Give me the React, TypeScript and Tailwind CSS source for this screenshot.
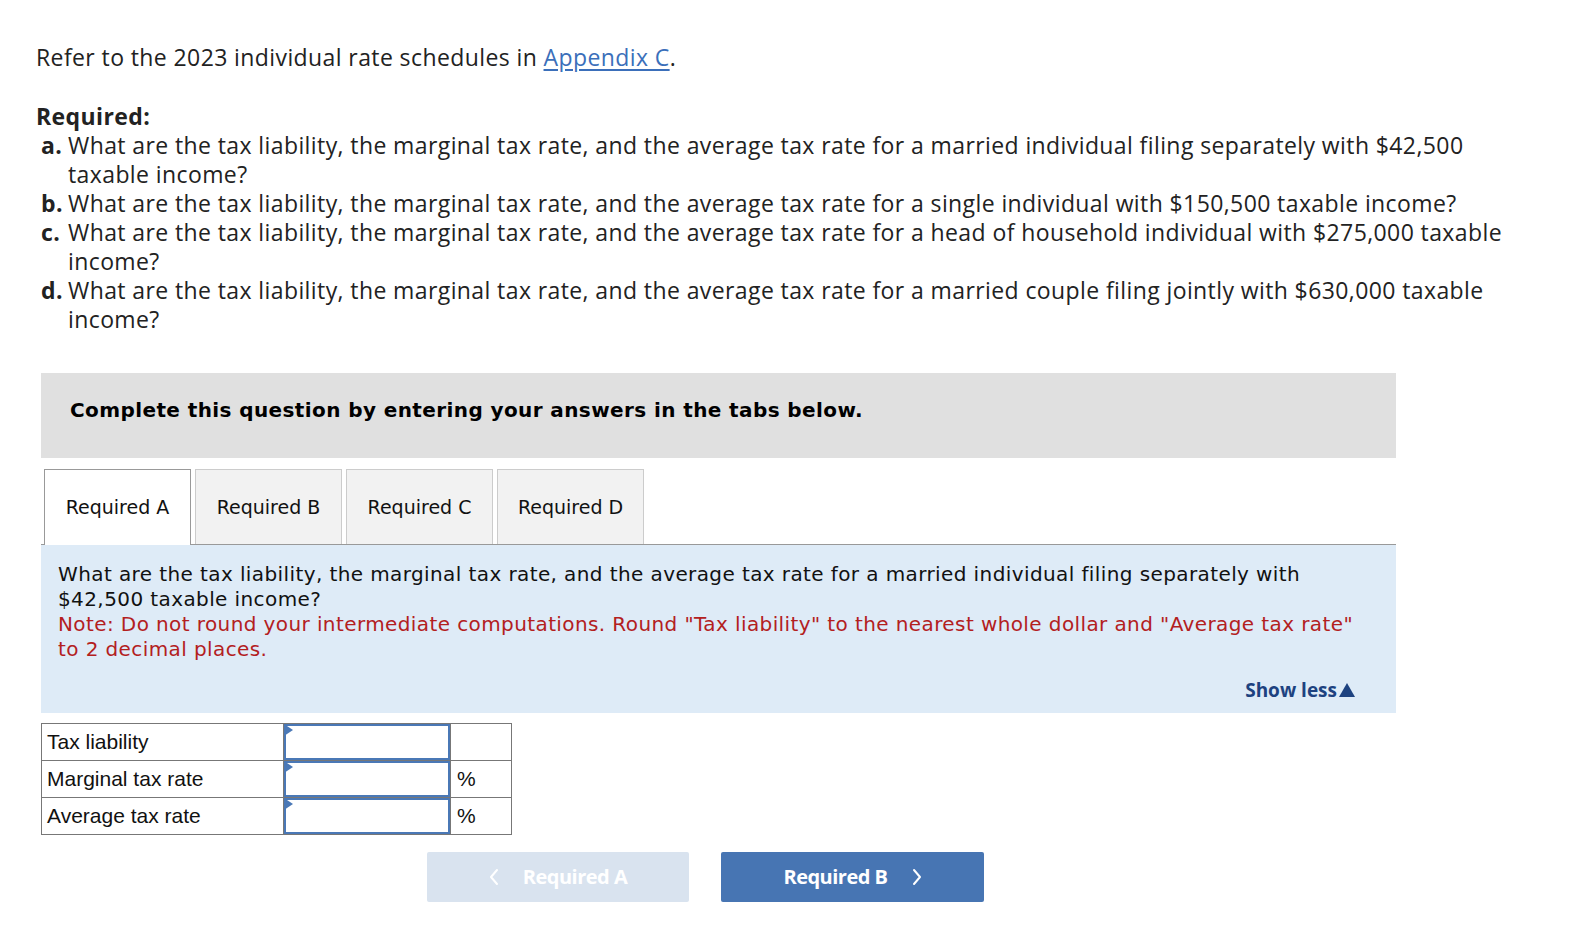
import React from 'react';

const questions = [
  { label: 'a.', text: 'What are the tax liability, the marginal tax rate, and the average tax rate for a married individual filing separately with $42,500 taxable income?' },
  { label: 'b.', text: 'What are the tax liability, the marginal tax rate, and the average tax rate for a single individual with $150,500 taxable income?' },
  { label: 'c.', text: 'What are the tax liability, the marginal tax rate, and the average tax rate for a head of household individual with $275,000 taxable income?' },
  { label: 'd.', text: 'What are the tax liability, the marginal tax rate, and the average tax rate for a married couple filing jointly with $630,000 taxable income?' },
];

const tabs = ['Required A', 'Required B', 'Required C', 'Required D'];

const rows = [
  { label: 'Tax liability', unit: '' },
  { label: 'Marginal tax rate', unit: '%' },
  { label: 'Average tax rate', unit: '%' },
];

const InputCell: React.FC = () => (
  <div className="relative h-full w-full border-2 border-[#4a78b6] bg-white">
    {/* small corner flag */}
    <svg className="absolute -left-[2px] -top-[2px]" width="10" height="12" viewBox="0 0 10 12">
      <polygon points="0,0 9,6 0,12" fill="#4a78b6" />
    </svg>
  </div>
);

const Chevron: React.FC<{ dir: 'left' | 'right' }> = ({ dir }) => (
  <svg width="10" height="18" viewBox="0 0 10 18" fill="none" stroke="currentColor" strokeWidth="2" strokeLinecap="round" strokeLinejoin="round">
    {dir === 'left' ? <polyline points="8,2 2,9 8,16" /> : <polyline points="2,2 8,9 2,16" />}
  </svg>
);

export default function App() {
  return (
    <div className="min-h-screen bg-white pl-[36px] pr-[40px] pt-[43px] text-[#222]" style={{ fontFamily: '"Open Sans", Lato, sans-serif' }}>
      <p className="text-[23px] leading-[29px] tracking-[0.4px]">
        Refer to the 2023 individual rate schedules in{' '}
        <a href="#" className="text-[#3b6fba] underline underline-offset-[3px]">Appendix C</a>.
      </p>

      <div className="mt-[30px] text-[23px] leading-[29px] tracking-[0.4px]">
        <p className="font-bold">Required:</p>
        <ul>
          {questions.map((q) => (
            <li key={q.label} className="flex">
              <span className="w-[32px] shrink-0 pl-[5px] font-bold">{q.label}</span>
              <span>{q.text}</span>
            </li>
          ))}
        </ul>
      </div>

      {/* answer area */}
      <div className="ml-[5px] mt-[39px] w-[1355px]">
        <div className="h-[85px] bg-[#e0e0e0] pl-[29px] pt-[25px]">
          <p className="text-[20px] font-bold leading-[24px] tracking-[0.4px] text-black" style={{ fontFamily: '"DejaVu Sans", Verdana, sans-serif' }}>
            Complete this question by entering your answers in the tabs below.
          </p>
        </div>

        <div className="mt-[11px] flex items-end border-b border-[#999] pl-[3px]" style={{ fontFamily: '"DejaVu Sans", Verdana, sans-serif' }}>
          {tabs.map((t, i) => (
            <div
              key={t}
              className={
                i === 0
                  ? 'relative -mb-px mr-[4px] flex h-[76px] w-[147px] items-center justify-center border border-b-0 border-[#999] bg-white text-[19px] text-[#111]'
                  : 'mr-[4px] flex h-[75px] w-[147px] items-center justify-center border border-b-0 border-[#ccc] bg-[#f2f2f2] text-[19px] text-[#111]'
              }
            >
              {t}
            </div>
          ))}
        </div>

        <div className="h-[168px] bg-[#deebf7] px-[17px] pt-[17px] tracking-[0.4px]" style={{ fontFamily: '"DejaVu Sans", Verdana, sans-serif' }}>
          <p className="text-[20px] leading-[25px] text-[#111]">
            What are the tax liability, the marginal tax rate, and the average tax rate for a married individual filing separately with $42,500 taxable income?
          </p>
          <p className="text-[20px] leading-[25px] text-[#b3201e]">
            Note: Do not round your intermediate computations. Round "Tax liability" to the nearest whole dollar and "Average tax rate" to 2 decimal places.
          </p>
          <div className="mt-[14px] flex justify-end pr-[24px] tracking-normal">
            <button className="flex items-center gap-[2px] text-[19px] font-bold text-[#1d4280]" style={{ fontFamily: '"Open Sans", sans-serif' }}>
              Show less
              <svg width="16" height="14" viewBox="0 0 16 14">
                <polygon points="8,0 16,14 0,14" fill="#1d4280" />
              </svg>
            </button>
          </div>
        </div>
      </div>

      <table className="ml-[5px] mt-[10px] border-collapse text-[21px] text-[#111]" style={{ fontFamily: '"Liberation Sans", Arial, sans-serif' }}>
        <tbody>
          {rows.map((r) => (
            <tr key={r.label} className="h-[37px]">
              <td className="w-[242px] border border-[#777] px-[5px] align-middle">{r.label}</td>
              <td className="h-[37px] w-[167px] border border-[#777] p-0">
                <InputCell />
              </td>
              <td className="w-[61px] border border-[#777] px-[6px]">{r.unit}</td>
            </tr>
          ))}
        </tbody>
      </table>

      <div className="ml-[391px] mt-[17px] flex gap-[32px]" style={{ fontFamily: '"Open Sans", sans-serif' }}>
        <button className="flex h-[50px] w-[262px] items-center justify-center gap-[24px] rounded-[2px] bg-[#d9e3ef] text-[20px] font-bold tracking-[-0.5px] text-white">
          <Chevron dir="left" />
          Required A
        </button>
        <button className="flex h-[50px] w-[263px] items-center justify-center gap-[24px] rounded-[2px] bg-[#4775b3] text-[20px] font-bold tracking-[-0.5px] text-white">
          Required B
          <Chevron dir="right" />
        </button>
      </div>
    </div>
  );
}
